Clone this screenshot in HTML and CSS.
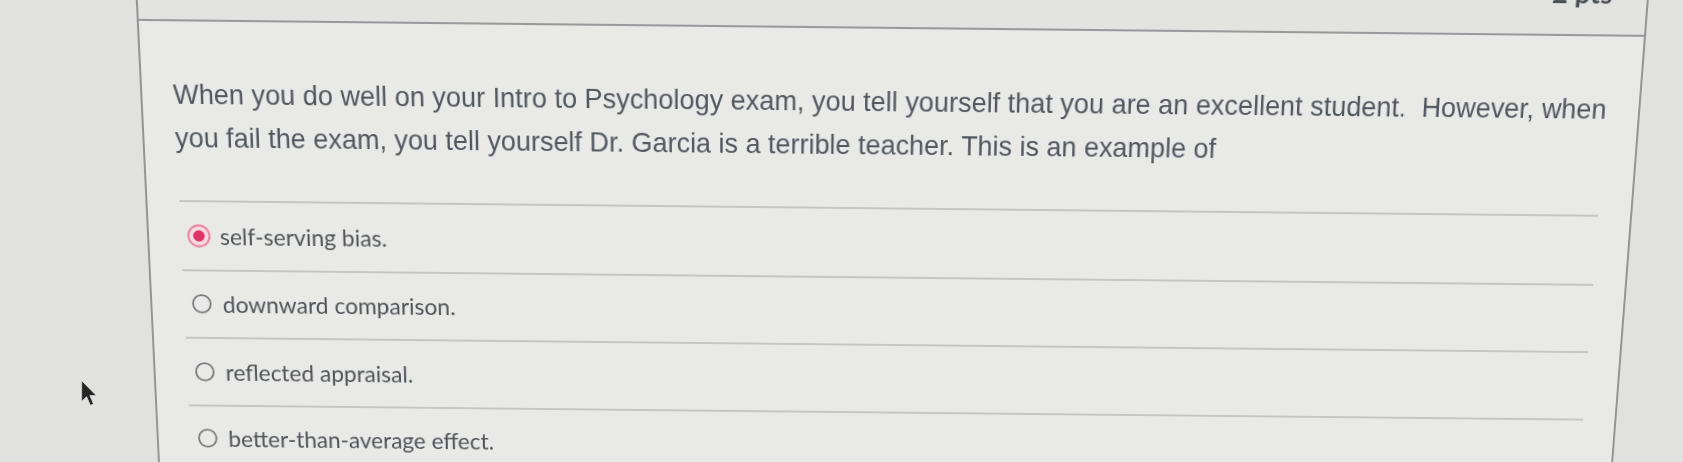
FILE: index.html
```html
<!DOCTYPE html>
<html lang="en">
<head>
<meta charset="utf-8">
<title>Quiz question</title>
<link rel="stylesheet" href="styles.css">
</head>
<body>
<div class="screen">
  <div class="card">
    <div class="card-header"><span class="pts">2 pts</span></div>
    <div class="card-body">
      <p class="question">When you do well on your Intro to Psychology exam, you tell yourself that you are an excellent student.&nbsp; However, when you fail the exam, you tell yourself Dr. Garcia is a terrible teacher. This is an example of</p>
      <div class="answers">
        <div class="answer">
          <span class="radio"><svg width="24" height="24" viewBox="0 0 24 24"><circle cx="12" cy="12" r="10.6" fill="#f6dbe2" stroke="#ea8ea7" stroke-width="2.2"/><circle cx="12" cy="12" r="5.8" fill="#df3468"/></svg></span>
          <span class="label">self-serving bias.</span>
        </div>
        <div class="answer">
          <span class="radio"><svg width="24" height="24" viewBox="0 0 24 24"><circle cx="12" cy="12" r="8.9" fill="none" stroke="#76787b" stroke-width="1.8"/></svg></span>
          <span class="label">downward comparison.</span>
        </div>
        <div class="answer">
          <span class="radio"><svg width="24" height="24" viewBox="0 0 24 24"><circle cx="12" cy="12" r="8.9" fill="none" stroke="#76787b" stroke-width="1.8"/></svg></span>
          <span class="label">reflected appraisal.</span>
        </div>
        <div class="answer">
          <span class="radio"><svg width="24" height="24" viewBox="0 0 24 24"><circle cx="12" cy="12" r="8.9" fill="none" stroke="#76787b" stroke-width="1.8"/></svg></span>
          <span class="label">better-than-average effect.</span>
        </div>
      </div>
    </div>
  </div>
</div>
<div class="cursor"><svg width="16" height="26" viewBox="0 0 12 19.5"><path d="M0.5 0.5 L0.5 16 L4.2 12.6 L7 19 L9.4 18 L6.7 11.7 L11.5 11.7 Z" fill="#262626" stroke="#d8d8d8" stroke-width="0.6"/></svg></div>
</body>
</html>
```
FILE: styles.css
```css
html, body {
  margin: 0;
  padding: 0;
  height: 100%;
}

body {
  background: #e1e2e0;
  overflow: hidden;
  position: relative;
}

.screen {
  width: 1683px;
  height: 462px;
  transform-origin: 841.5px 231px;
  transform: perspective(1000px) rotateX(-4.8deg) rotate(0.6deg);
}

.card {
  margin-left: 145px;
  width: 1485px;
  height: 640px;
  margin-top: -40px;
  padding-top: 40px;
  border-left: 2px solid #939497;
  border-right: 2px solid #939497;
  background: #e9eae8;
}

.card-header {
  height: 28px;
  border-bottom: 2px solid #98999b;
  background: #e3e4e2;
  margin-top: -40px;
  padding-top: 40px;
  display: flex;
  justify-content: flex-end;
  align-items: flex-start;
  padding-right: 34px;
  overflow: hidden;
}

.pts {
  font-family: Lato, "Noto Sans", sans-serif;
  font-weight: 700;
  font-size: 27px;
  line-height: 27px;
  color: #4b4e53;
  margin-top: -26px;
}

.card-body {
  padding-left: 30.5px;
}

.question {
  margin: 51px 0 0;
  padding-right: 10px;
  font-family: "Liberation Sans", Arial, sans-serif;
  font-size: 26.9px;
  line-height: 42.5px;
  color: #52565d;
}

.answers {
  margin-top: 41px;
  margin-left: 1px;
  margin-right: 32px;
}

.answer {
  border-top: 2px solid #c4c5c5;
  height: 67.5px;
  display: flex;
  align-items: center;
  padding-left: 6.5px;
}

.radio {
  width: 24px;
  height: 24px;
  display: flex;
}

.label {
  margin-left: 9px;
  font-family: Lato, "Noto Sans", sans-serif;
  font-size: 23px;
  color: #505357;
}

.cursor {
  position: absolute;
  left: 81px;
  top: 380px;
  filter: blur(0.5px);
}
```
